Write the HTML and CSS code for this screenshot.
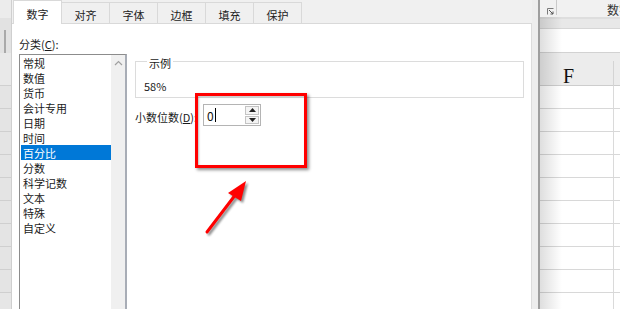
FILE: index.html
```html
<!DOCTYPE html>
<html lang="zh-CN">
<head>
<meta charset="utf-8">
<link rel="stylesheet" href="styles.css">
</head>
<body>
<div class="screen">
  <div class="sheet-left">
    <div class="sl-top"><span class="sl-mark"></span></div>
    <div class="sl-row"></div><div class="sl-row"></div><div class="sl-row"></div>
    <div class="sl-row"></div><div class="sl-row"></div><div class="sl-row"></div>
    <div class="sl-row"></div><div class="sl-row"></div><div class="sl-row"></div>
  </div>

  <div class="dialog">
    <div class="tabs">
      <div class="tab active">数字</div>
      <div class="tab">对齐</div>
      <div class="tab">字体</div>
      <div class="tab">边框</div>
      <div class="tab">填充</div>
      <div class="tab">保护</div>
    </div>
    <div class="panel">
      <div class="cat-col">
        <div class="label">分类(<u>C</u>):</div>
        <div class="listbox">
          <ul class="items">
            <li>常规</li>
            <li>数值</li>
            <li>货币</li>
            <li>会计专用</li>
            <li>日期</li>
            <li>时间</li>
            <li class="selected">百分比</li>
            <li>分数</li>
            <li>科学记数</li>
            <li>文本</li>
            <li>特殊</li>
            <li>自定义</li>
          </ul>
          <div class="vscroll">
            <svg class="chev" width="9" height="6" viewBox="0 0 9 6"><path d="M1 5 L4.5 1.5 L8 5" fill="none" stroke="#a0a0a0" stroke-width="1.2"/></svg>
          </div>
        </div>
      </div>
      <div class="detail-col">
        <fieldset class="sample">
          <legend>示例</legend>
          <div class="sample-val">58%</div>
        </fieldset>
        <div class="decimals">
          <div class="dec-label">小数位数(<u>D</u>):</div>
          <div class="spin">
            <div class="spin-input"><span>0</span><span class="caret"></span></div>
            <div class="spin-btns">
              <div class="spin-btn"><svg width="7" height="4" viewBox="0 0 7 4"><path d="M0 4 L3.5 0 L7 4 Z" fill="#222"/></svg></div>
              <div class="spin-btn"><svg width="7" height="4" viewBox="0 0 7 4"><path d="M0 0 L3.5 4 L7 0 Z" fill="#222"/></svg></div>
            </div>
          </div>
        </div>
      </div>
    </div>
  </div>

  <div class="frame"></div>

  <div class="excel">
    <div class="ribbon">
      <svg class="launcher" width="7" height="7" viewBox="0 0 7 7"><path d="M0.5 6.5 V0.5 H6.5" fill="none" stroke="#7a7a7a"/><path d="M2 2 L6 6 M6 3.5 V6 H3.5" fill="none" stroke="#555"/></svg>
      <span class="rsep"></span>
      <span class="rtext">数字</span>
    </div>
    <div class="band"></div>
    <div class="fbar"></div>
    <div class="colhead"><span class="colname">F</span><span class="colrest"></span></div>
    <div class="xrow"><span class="c1"></span><span class="c2"></span></div>
    <div class="xrow"><span class="c1"></span><span class="c2"></span></div>
    <div class="xrow"><span class="c1"></span><span class="c2"></span></div>
    <div class="xrow"><span class="c1"></span><span class="c2"></span></div>
    <div class="xrow"><span class="c1"></span><span class="c2"></span></div>
    <div class="xrow"><span class="c1"></span><span class="c2"></span></div>
    <div class="xrow"><span class="c1"></span><span class="c2"></span></div>
    <div class="xrow"><span class="c1"></span><span class="c2"></span></div>
    <div class="xrow"><span class="c1"></span><span class="c2"></span></div>
    <div class="xrow"><span class="c1"></span><span class="c2"></span></div>
  </div>

  <div class="callout"></div>
  <svg class="arrow" width="620" height="309" viewBox="0 0 620 309">
    <defs>
      <filter id="sh" x="-20%" y="-20%" width="140%" height="140%"><feGaussianBlur stdDeviation="1.2"/></filter>
    </defs>
    <g transform="translate(2,2)" filter="url(#sh)" opacity="0.45">
      <line x1="207" y1="232" x2="236" y2="194" stroke="#000" stroke-width="3" stroke-linecap="round"/>
      <path d="M246 181 L228 193 L241 201 Z" fill="#000"/>
    </g>
    <line x1="207" y1="232" x2="236" y2="194" stroke="#ff0000" stroke-width="3" stroke-linecap="round"/>
    <path d="M246 181 L228 193 L241 201 Z" fill="#ff0000"/>
  </svg>
</div>
</body>
</html>
```

FILE: styles.css
```css
* { box-sizing: border-box; }
html, body { margin: 0; padding: 0; }
body {
  width: 620px;
  height: 309px;
  overflow: hidden;
  background: #f0f0f0;
  font-family: "Noto Sans CJK SC", "Noto Sans", sans-serif;
  font-size: 11px;
  color: #1a1a1a;
}
.screen {
  position: relative;
  display: flex;
  width: 620px;
  height: 309px;
  overflow: hidden;
}

/* left sliver of the spreadsheet */
.sheet-left {
  width: 12px;
  flex: none;
  background: #e6e6e6;
  border-right: 1px solid #cfcfcf;
  display: flex;
  flex-direction: column;
}
.sl-top {
  height: 86px;
  position: relative;
  border-bottom: 1px solid #d0d0d0;
  background: linear-gradient(#ececec 0 18px, #e2e2e2 18px 53px, #e9e9e9 53px);
}
.sl-mark {
  position: absolute;
  left: 4px;
  top: 30px;
  width: 2px;
  height: 23px;
  background: #a9a9a9;
}
.sl-row {
  height: 23px;
  flex: none;
  border-bottom: 1px solid #cfcfcf;
  background: #e4e4e4;
}

/* dialog */
.dialog {
  width: 520px;
  flex: none;
  display: flex;
  flex-direction: column;
  background: #f0f0f0;
}
.tabs {
  height: 26px;
  display: flex;
  align-items: flex-end;
  padding-left: 1px;
  position: relative;
  z-index: 1;
}
.tab {
  width: 48px;
  height: 21px;
  border: 1px solid #d9d9d9;
  border-bottom: none;
  border-left: none;
  background: #f0f0f0;
  display: flex;
  align-items: center;
  justify-content: center;
  font-size: 11px;
  color: #222;
  padding-top: 3px;
}
.tab.active {
  width: 49px;
  height: 24px;
  background: #ffffff;
  border-left: 1px solid #d9d9d9;
  margin-bottom: -1px;
  padding-top: 2px;
}
.panel {
  flex: 1;
  background: #ffffff;
  border-top: 1px solid #d9d9d9;
  border-right: 1px solid #dcdcdc;
  display: flex;
  padding-left: 7px;
}
.cat-col {
  width: 108px;
  flex: none;
  display: flex;
  flex-direction: column;
  padding-top: 12px;
}
.label {
  box-sizing: content-box;
  height: 12px;
  line-height: 12px;
  padding-top: 2px;
  margin-bottom: 4px;
}
.label u, .dec-label u { text-decoration: underline; text-underline-offset: 1px; }
.listbox {
  height: 260px;
  border: 1px solid #8c8c8c;
  border-right-color: #a8adb6;
  border-right-width: 2px;
  display: flex;
}
.items {
  list-style: none;
  margin: 0;
  padding: 0 0 0 1px;
  flex: 1;
}
.items li {
  height: 15px;
  line-height: 13px;
  padding-top: 2px;
  padding-left: 2px;
  white-space: nowrap;
}
.items li.selected {
  background: #0078d7;
  color: #ffffff;
}
.vscroll {
  width: 14px;
  flex: none;
  background: #f0f0f0;
  display: flex;
  justify-content: center;
  padding-top: 5px;
}
.chev { display: block; }

.detail-col {
  margin-left: 8px;
  padding-top: 30px;
  display: flex;
  flex-direction: column;
}
.sample {
  width: 389px;
  margin: 0;
  border: 1px solid #dcdcdc;
  padding: 9px 0 5px 8px;
}
.sample legend {
  padding: 3px 2px 0;
  margin-left: 3px;
  line-height: 12px;
  height: 15px;
  font-size: 11px;
}
.sample-val {
  height: 14px;
  line-height: 12px;
  padding-top: 2px;
}
.decimals {
  margin-top: 6px;
  display: flex;
  align-items: center;
  height: 22px;
}
.dec-label {
  width: 68px;
  line-height: 12px;
  padding-top: 3px;
}
.spin {
  width: 58px;
  height: 22px;
  border: 1px solid #b4b4b4;
  display: flex;
  background: #fff;
}
.spin-input {
  flex: 1;
  display: flex;
  align-items: center;
  padding-left: 3px;
  font-size: 12px;
  color: #111;
}
.caret {
  width: 1px;
  height: 14px;
  background: #000;
  margin-left: 1px;
}
.spin-btns {
  width: 15px;
  flex: none;
  display: flex;
  flex-direction: column;
  padding: 1px 1px 1px 0;
  gap: 1px;
}
.spin-btn {
  flex: 1;
  border: 1px solid #c4c4c4;
  background: #f4f4f4;
  display: flex;
  align-items: center;
  justify-content: center;
}
.spin-btn svg { display: block; }

/* frame between dialog and sheet */
.frame {
  width: 6px;
  flex: none;
  background: #ededed;
}

/* spreadsheet on the right */
.excel {
  width: 82px;
  flex: none;
  border-left: 2px solid #9e9e9e;
  display: flex;
  flex-direction: column;
  background: #fff;
  position: relative;
}
.excel::after {
  content: "";
  position: absolute;
  left: 0;
  top: 17px;
  bottom: 0;
  width: 22px;
  background: linear-gradient(to right, rgba(0,0,0,0.13), rgba(0,0,0,0));
  pointer-events: none;
}
.ribbon {
  height: 17px;
  flex: none;
  background: #f1f1f1;
  display: flex;
  align-items: flex-start;
  overflow: hidden;
}
.ribbon > * { flex: none; }
.launcher {
  margin: 8px 0 0 7px;
  display: block;
}
.rsep {
  width: 1px;
  height: 15px;
  background: #c9c9c9;
  margin-left: 2px;
}
.rtext {
  margin-left: 50px;
  margin-top: 3px;
  font-size: 12px;
  line-height: 13px;
  white-space: nowrap;
  color: #333;
}
.band {
  height: 12px;
  flex: none;
  background: #e8e8e8;
  border-top: 2px solid #dedede;
  border-bottom: 1px solid #d6d6d6;
}
.fbar {
  height: 24px;
  flex: none;
  background: #fff;
  border-bottom: 1px solid #d2d2d2;
}
.colhead {
  height: 33px;
  flex: none;
  background: #ececec;
  border-bottom: 1px solid #cdcdcd;
  display: flex;
}
.colname {
  width: 74px;
  flex: none;
  display: flex;
  align-items: center;
  padding-left: 23px;
  font-family: "Liberation Serif", "DejaVu Serif", serif;
  font-size: 20px;
  color: #111;
  padding-top: 5px;
  border-right: 1px solid #d4d4d4;
  margin-top: 8px;
  margin-bottom: -1px;
}
.colrest { flex: 1; }
.xrow {
  height: 23px;
  flex: none;
  border-bottom: 1px solid #d8d8d8;
  display: flex;
}
.c1 {
  width: 74px;
  flex: none;
  border-right: 1px solid #dadada;
}
.c2 { flex: 1; }

/* annotation overlays */
.callout {
  position: absolute;
  left: 195px;
  top: 93px;
  width: 112px;
  height: 75px;
  border: 3px solid #ff0000;
  box-shadow: 2px 2px 3px rgba(0,0,0,0.45), inset 1px 1px 2px rgba(0,0,0,0.25);
  pointer-events: none;
}
.arrow {
  position: absolute;
  left: 0;
  top: 0;
  pointer-events: none;
}
```
